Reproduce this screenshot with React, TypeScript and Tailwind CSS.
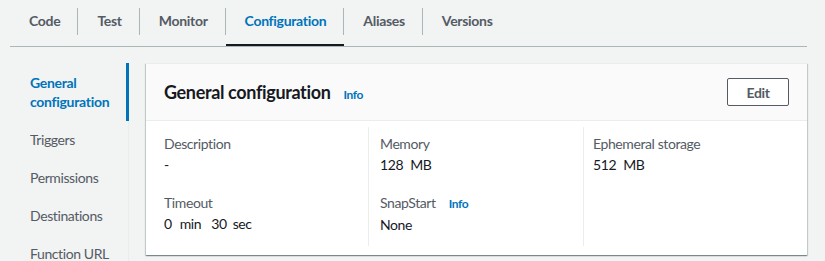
import { useState } from "react"

const tabs = ["Code", "Test", "Monitor", "Configuration", "Aliases", "Versions"]
const navItems = ["General configuration", "Triggers", "Permissions", "Destinations", "Function URL"]

function Field({ label, info, children }: { label: string; info?: boolean; children: React.ReactNode }) {
    return (
        <div>
            <div className="flex items-baseline gap-[13px] leading-[20px] text-[#545b64]">
                <span>{label}</span>
                {info && <span className="text-[12px] font-bold text-[#0073bb]">Info</span>}
            </div>
            <div className="mt-px leading-[20px] text-[#16191f]">{children}</div>
        </div>
    )
}

export default function App() {
    const [active, setActive] = useState("Configuration")
    const [section, setSection] = useState("General configuration")

    return (
        <div className="h-[261px] w-[825px] overflow-hidden bg-[#f2f3f3] text-[14px] tracking-[-0.4px] font-['Lato',sans-serif]">
            {/* Tabs */}
            <div className="ml-[10px] flex w-[797px] border-b border-[#aab7b8]">
                {tabs.map((t, i) => (
                    <button
                        key={t}
                        onClick={() => setActive(t)}
                        className={`flex h-[46px] flex-col border-b-2 tracking-[-0.3px] ${active === t ? "border-[#16191f] text-[#0073bb]" : "border-transparent text-[#545b64]"}`}
                    >
                        <span
                            className={`mt-[8px] flex h-[27px] items-center pb-[2px] pl-[19px] pr-[17px] font-bold ${i < tabs.length - 1 ? "border-r border-[#aab7b8]" : ""}`}
                        >
                            {t}
                        </span>
                    </button>
                ))}
            </div>

            <div className="flex pt-[16px]">
                {/* Side nav */}
                <nav className="ml-[10px] w-[119px] border-r border-[#eaeded]">
                    {navItems.map((n) => (
                        <div
                            key={n}
                            onClick={() => setSection(n)}
                            className={`-mr-px pl-[20px] pr-[6px] ${section === n ? "border-r-[3px] border-[#0073bb] py-[10px] leading-[19px] font-bold tracking-[-0.3px] text-[#0073bb]" : "py-[9px] leading-[20px] text-[#545b64]"}`}
                        >
                            {n}
                        </div>
                    ))}
                </nav>

                {/* Panel */}
                <div className="ml-[17px] h-[192px] w-[661px] border-t border-[#eaeded] bg-white shadow-[0_1px_1px_0_rgba(0,28,36,0.3),1px_1px_1px_0_rgba(0,28,36,0.15),-1px_1px_1px_0_rgba(0,28,36,0.15)]">
                    <div className="flex h-[57px] items-center justify-between border-b border-[#eaeded] bg-[#fafafa] px-[18px]">
                        <div className="flex items-baseline gap-[13px]">
                            <h2 className="text-[18px] font-bold tracking-[-0.35px] text-[#16191f]">General configuration</h2>
                            <span className="text-[12px] font-bold text-[#0073bb]">Info</span>
                        </div>
                        <button className="h-[28px] w-[62px] rounded-[2px] border border-[#545b64] bg-white font-bold text-[#545b64]">
                            Edit
                        </button>
                    </div>

                    <div className="grid grid-cols-[204px_215px_1fr] px-[18px] pb-[9px] pt-[6px]">
                        <div className="flex flex-col gap-[18px] pb-[11px] pt-[7px]">
                            <Field label="Description">-</Field>
                            <Field label="Timeout">
                                <span className="mr-[8px]">0</span>
                                <span className="mr-[10px]">min</span>
                                <span className="mr-[6px]">30</span>
                                <span>sec</span>
                            </Field>
                        </div>
                        <div className="flex flex-col gap-[18px] border-l border-[#eaeded] pb-[11px] pl-[11px] pt-[7px]">
                            <Field label="Memory">
                                <span className="mr-[7px]">128</span>
                                <span>MB</span>
                            </Field>
                            <Field label="SnapStart" info>
                                None
                            </Field>
                        </div>
                        <div className="flex flex-col gap-[18px] border-l border-[#eaeded] pb-[11px] pl-[9px] pt-[7px]">
                            <Field label="Ephemeral storage">
                                <span className="mr-[7px]">512</span>
                                <span>MB</span>
                            </Field>
                        </div>
                    </div>
                </div>
            </div>
        </div>
    )
}
